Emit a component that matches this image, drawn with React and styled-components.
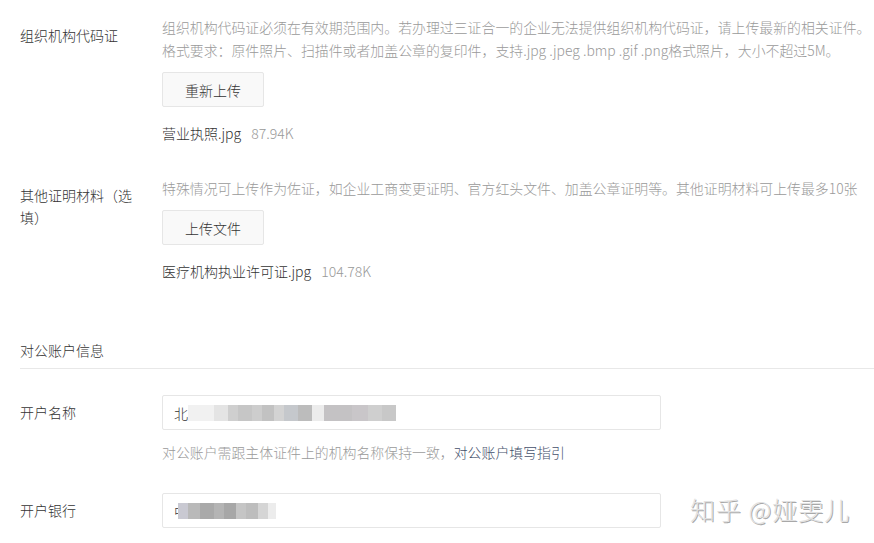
import React from "react";
import styled, { createGlobalStyle } from "styled-components";

const GlobalStyle = createGlobalStyle`
  body {
    margin: 0;
    background: #fff;
    font-family: "Noto Sans CJK SC", "Noto Sans", sans-serif;
    font-weight: 300;
    color: #333;
  }
`;

const Page = styled.div`
  position: relative;
  width: 874px;
  height: 543px;
  overflow: hidden;
  padding-left: 20px;
  box-sizing: border-box;
`;

const FormRow = styled.div`
  display: grid;
  grid-template-columns: 142px 1fr;
  align-items: start;
  margin-top: ${(p) => p.$top || 0}px;
`;

const Label = styled.div`
  font-size: 14px;
  line-height: 22px;
  color: #333;
  padding-top: ${(p) => p.$offset || 0}px;
  padding-right: 10px;
`;

const Field = styled.div`
  display: flex;
  flex-direction: column;
  align-items: flex-start;
`;

const Hint = styled.p`
  margin: ${(p) => p.$top || 0}px 0 0;
  font-size: 13.9px;
  line-height: 23px;
  color: #9a9a9a;
  white-space: nowrap;
`;

const GuideLink = styled.a`
  color: #44506b;
  text-decoration: none;
`;

const UploadButton = styled.button`
  margin-top: 10px;
  width: 102px;
  height: 35px;
  background: #f9f9f9;
  border: 1px solid #e6e6e6;
  border-radius: 2px;
  font-family: inherit;
  font-weight: 300;
  font-size: 14px;
  color: #333;
  cursor: pointer;
`;

const FileLine = styled.div`
  margin-top: 15px;
  font-size: 14px;
  line-height: 22px;
  color: #333;
  display: flex;
  gap: 10px;
`;

const FileSize = styled.span`
  color: #999;
`;

const SectionTitle = styled.div`
  margin-top: 57px;
  font-size: 14px;
  line-height: 22px;
  color: #333;
  padding-bottom: 7px;
  border-bottom: 1px solid #e8e8e8;
  margin-right: -20px;
`;

const Input = styled.div`
  width: 499px;
  height: 35px;
  box-sizing: border-box;
  border: 1px solid #e6e6e6;
  border-radius: 2px;
  padding: 0 11px;
  display: flex;
  align-items: center;
  font-size: 14px;
  color: #333;
`;

const Masked = styled.span`
  display: inline-flex;
  height: 16px;
  margin-left: ${(p) => p.$shift || 0}px;
  filter: blur(0.6px);
`;

const Chip = styled.span`
  display: inline-block;
  width: ${(p) => p.$w}px;
  height: 100%;
  background: ${(p) => p.$c};
`;

const Watermark = styled.div`
  position: absolute;
  left: 690px;
  top: 492px;
  font-size: 25px;
  line-height: 34px;
  letter-spacing: 1px;
  color: #e2e2e2;
  text-shadow: 1px 1px 0 #a8a8a8;
  white-space: nowrap;
`;

const nameMask = [
  [26, "#f1f1f1"], [14, "#e4e4e4"], [10, "#cfcfcf"], [14, "#c6c6c6"], [10, "#cdcdcd"],
  [12, "#c2c2c2"], [10, "#d3d3d3"], [14, "#c5c8cc"], [14, "#bcbcbc"], [12, "#ececec"],
  [28, "#c4c2c4"], [16, "#c9c6c9"], [14, "#cfcfcf"], [14, "#c8c8c8"],
];

const bankMask = [
  [10, "#c9c9d2"], [12, "#b9b9b9"], [14, "#a9a9a9"], [10, "#b4b4b4"], [12, "#a7a7a7"],
  [10, "#c5c5c5"], [12, "#bdbdbd"], [10, "#d5d5d5"], [8, "#ececec"],
];

const MaskBlock = ({ chips, shift }) => (
  <Masked $shift={shift}>
    {chips.map(([w, c], i) => (
      <Chip key={i} $w={w} $c={c} />
    ))}
  </Masked>
);

export default function App() {
  return (
    <>
      <GlobalStyle />
      <Page>
        <FormRow $top={16}>
          <Label $offset={8}>组织机构代码证</Label>
          <Field>
            <Hint>
              组织机构代码证必须在有效期范围内。若办理过三证合一的企业无法提供组织机构代码证，请上传最新的相关证件。
              <br />
              格式要求：原件照片、扫描件或者加盖公章的复印件，支持.jpg .jpeg .bmp .gif .png格式照片，大小不超过5M。
            </Hint>
            <UploadButton>重新上传</UploadButton>
            <FileLine>
              <span>营业执照.jpg</span>
              <FileSize>87.94K</FileSize>
            </FileLine>
          </Field>
        </FormRow>

        <FormRow $top={33}>
          <Label $offset={7}>其他证明材料（选填）</Label>
          <Field>
            <Hint>
              特殊情况可上传作为佐证，如企业工商变更证明、官方红头文件、加盖公章证明等。其他证明材料可上传最多10张
            </Hint>
            <UploadButton>上传文件</UploadButton>
            <FileLine>
              <span>医疗机构执业许可证.jpg</span>
              <FileSize>104.78K</FileSize>
            </FileLine>
          </Field>
        </FormRow>

        <SectionTitle>对公账户信息</SectionTitle>

        <FormRow $top={26}>
          <Label $offset={6}>开户名称</Label>
          <Field>
            <Input>
              北
              <MaskBlock chips={nameMask} />
            </Input>
            <Hint $top={11}>
              对公账户需跟主体证件上的机构名称保持一致，<GuideLink href="#">对公账户填写指引</GuideLink>
            </Hint>
          </Field>
        </FormRow>

        <FormRow $top={29}>
          <Label $offset={6}>开户银行</Label>
          <Field>
            <Input>
              <span>中</span>
              <MaskBlock chips={bankMask} shift={-10} />
            </Input>
          </Field>
        </FormRow>

        <Watermark>知乎 @娅雯儿</Watermark>
      </Page>
    </>
  );
}
